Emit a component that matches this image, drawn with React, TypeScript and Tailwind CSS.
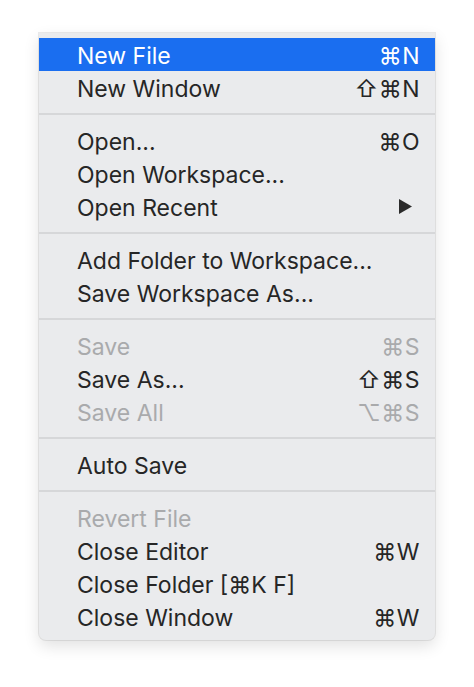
import type { ReactNode } from "react";

type Item = {
  label: string;
  shortcut?: ReactNode;
  disabled?: boolean;
  active?: boolean;
  submenu?: boolean;
};

const groups: Item[][] = [
  [
    { label: "New File", shortcut: "⌘N", active: true },
    { label: "New Window", shortcut: "⇧⌘N" },
  ],
  [
    { label: "Open...", shortcut: "⌘O" },
    { label: "Open Workspace..." },
    { label: "Open Recent", submenu: true },
  ],
  [{ label: "Add Folder to Workspace..." }, { label: "Save Workspace As..." }],
  [
    { label: "Save", shortcut: "⌘S", disabled: true },
    { label: "Save As...", shortcut: "⇧⌘S" },
    { label: "Save All", shortcut: "⌥⌘S", disabled: true },
  ],
  [{ label: "Auto Save" }],
  [
    { label: "Revert File", disabled: true },
    { label: "Close Editor", shortcut: "⌘W" },
    { label: "Close Folder [⌘K F]" },
    { label: "Close Window", shortcut: "⌘W" },
  ],
];

function MenuRow({ item }: { item: Item }) {
  const color = item.active
    ? "bg-[#1a6ef0] text-white"
    : item.disabled
      ? "text-[#a9aaac]"
      : "text-[#262626]";
  return (
    <div className={`flex h-[33px] items-center justify-between pl-[38px] pr-[15px] pt-[3px] ${color}`}>
      <span>{item.label}</span>
      {item.shortcut && <span className="tracking-[0.5px]">{item.shortcut}</span>}
      {item.submenu && (
        <svg width="13" height="15" viewBox="0 0 13 15" className="mr-[8px] -mt-[3px]">
          <path d="M0 0 L13 7.5 L0 15 Z" fill="#2b2b2b" />
        </svg>
      )}
    </div>
  );
}

export default function App() {
  return (
    <div className="h-[687px] w-full bg-white pl-[39px] pt-[33px]">
      <div
        className="w-[396px] rounded-b-[7px] bg-[#eaebed] pb-[7px] pt-[5px] text-[23px] leading-none shadow-[0_0_0_1px_rgba(0,0,0,0.08),0_6px_16px_rgba(0,0,0,0.12)]"
        style={{ fontFamily: "Inter, 'DejaVu Sans', sans-serif" }}
      >
        {groups.map((group, gi) => (
          <div key={gi}>
            {gi > 0 && (
              <div className="flex h-[20px] items-center">
                <div className="h-[2px] w-full bg-[#d6d7d9]" />
              </div>
            )}
            {group.map((item) => (
              <MenuRow key={item.label} item={item} />
            ))}
          </div>
        ))}
      </div>
    </div>
  );
}
